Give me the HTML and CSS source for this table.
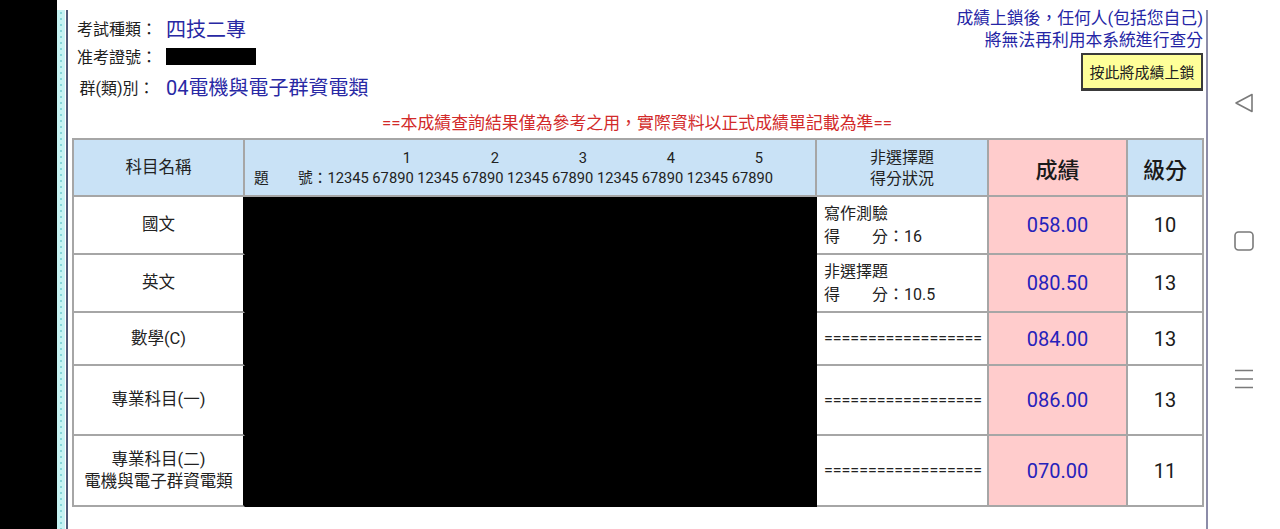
FILE: index.html
```html
<!DOCTYPE html>
<html lang="zh-Hant">
<head>
<meta charset="utf-8">
<title>成績查詢</title>
<link rel="stylesheet" href="styles.css">
</head>
<body>
<div class="screen">
  <div class="blackbar"></div>
  <div class="strip"></div>
  <div class="edge"></div>
  <main class="content">
    <div class="top">
      <div class="info">
        <div class="row r1"><span class="lbl">考試種類：</span><span class="val">四技二專</span></div>
        <div class="row r2"><span class="lbl">准考證號：</span><span class="redact"></span></div>
        <div class="row r3"><span class="lbl">群(類)別：</span><span class="val">04電機與電子群資電類</span></div>
      </div>
      <div class="lock">
        <p class="warn">成績上鎖後，任何人(包括您自己)<br>將無法再利用本系統進行查分</p>
        <button class="lockbtn" type="button">按此將成績上鎖</button>
      </div>
    </div>
    <p class="notice">==本成績查詢結果僅為參考之用，實際資料以正式成績單記載為準==</p>
    <table class="scores">
      <colgroup>
        <col class="c1"><col class="c2"><col class="c3"><col class="c4"><col class="c5">
      </colgroup>
      <thead>
        <tr class="hrow">
          <th class="subj">科目名稱</th>
          <th class="qhead">
            <div class="qnums"><span>1</span><span>2</span><span>3</span><span>4</span><span>5</span></div>
            <div class="qline"><span>題　　號：</span>12345 67890 12345 67890 12345 67890 12345 67890 12345 67890</div>
          </th>
          <th class="nhead">非選擇題<br>得分狀況</th>
          <th class="shead">成績</th>
          <th class="ghead">級分</th>
        </tr>
      </thead>
      <tbody>
        <tr class="d1">
          <td class="subj">國文</td>
          <td class="hidden" rowspan="5"></td>
          <td class="note">寫作測驗<br>得　　分：16</td>
          <td class="score">058.00</td>
          <td class="grade">10</td>
        </tr>
        <tr class="d2">
          <td class="subj">英文</td>
          <td class="note">非選擇題<br>得　　分：10.5</td>
          <td class="score">080.50</td>
          <td class="grade">13</td>
        </tr>
        <tr class="d3">
          <td class="subj">數學(C)</td>
          <td class="note">==================</td>
          <td class="score">084.00</td>
          <td class="grade">13</td>
        </tr>
        <tr class="d4">
          <td class="subj">專業科目(一)</td>
          <td class="note">==================</td>
          <td class="score">086.00</td>
          <td class="grade">13</td>
        </tr>
        <tr class="d5">
          <td class="subj">專業科目(二)<br>電機與電子群資電類</td>
          <td class="note">==================</td>
          <td class="score">070.00</td>
          <td class="grade">11</td>
        </tr>
      </tbody>
    </table>
  </main>
  <div class="edge right"></div>
  <nav class="navbar">
    <svg class="nav-icon" width="20" height="20" viewBox="0 0 20 20" aria-label="back"><path d="M2 10 L18 1.5 L18 18.5 Z" fill="none" stroke="#7a7a7a" stroke-width="1.6" stroke-linejoin="round"/></svg>
    <svg class="nav-icon" width="20" height="20" viewBox="0 0 20 20" aria-label="home"><rect x="1" y="1" width="18" height="18" rx="3.5" fill="none" stroke="#7a7a7a" stroke-width="1.6"/></svg>
    <svg class="nav-icon" width="20" height="20" viewBox="0 0 20 20" aria-label="recent"><path d="M1 1.5 H19 M1 10 H19 M1 18.5 H19" fill="none" stroke="#7a7a7a" stroke-width="1.6"/></svg>
  </nav>
</div>
</body>
</html>
```

FILE: styles.css
```css
* { box-sizing: border-box; }

html, body {
  margin: 0;
  padding: 0;
  background: #ffffff;
}

body {
  font-family: Roboto, "Noto Sans CJK TC", "Noto Sans", sans-serif;
  color: #222;
  width: 1280px;
  height: 529px;
  overflow: hidden;
}

.screen {
  display: flex;
  height: 529px;
}

.blackbar {
  width: 57px;
  flex: none;
  background: #000;
}

.strip {
  width: 8px;
  flex: none;
  margin-top: 10px;
  background-color: #c6f3f3;
  background-image: radial-gradient(circle, #86d6da 0.9px, transparent 1.4px);
  background-size: 8px 6px;
}

.edge {
  width: 2px;
  flex: none;
  margin: 10px 0 0 1px;
  background: #4f5a78;
}

.edge.right {
  margin: 10px 0 0 0;
  background: #8c8ca8;
}

.content {
  flex: 1;
  min-width: 0;
  display: flex;
  flex-direction: column;
}

.top {
  display: flex;
  justify-content: space-between;
  align-items: flex-start;
}

.info {
  padding: 14px 0 0 9px;
}

.row {
  display: flex;
  align-items: center;
  height: 28px;
}

.row.r3 {
  height: 33px;
}

.lbl {
  width: 80px;
  text-align: center;
  font-size: 16px;
  color: #1e1e1e;
}

.val {
  margin-left: 9px;
  font-size: 20px;
  color: #2828a4;
}

.redact {
  margin-left: 9px;
  width: 90px;
  height: 17px;
  background: #000;
}

.lock {
  display: flex;
  flex-direction: column;
  align-items: flex-end;
  padding: 7px 3px 0 0;
}

.warn {
  margin: 0;
  text-align: right;
  font-size: 16.8px;
  line-height: 22px;
  color: #2525a5;
}

.lockbtn {
  margin-top: 2px;
  width: 122px;
  height: 38px;
  padding: 0;
  background: #ffff99;
  border: 2px solid #3a3a3a;
  border-bottom-width: 3px;
  font-family: Roboto, "Noto Sans CJK TC", sans-serif;
  font-size: 15px;
  color: #222;
}

.notice {
  margin: 10px 0 0 0;
  text-align: center;
  font-size: 16.9px;
  line-height: 20px;
  color: #d22a2a;
}

.scores {
  margin: 5px 0 0 4px;
  width: 1132px;
  table-layout: fixed;
  border-collapse: separate;
  border-spacing: 0;
  border-top: 2px solid #a6a6a6;
  border-left: 2px solid #a6a6a6;
}

.c1 { width: 171px; }
.c2 { width: 572px; }
.c3 { width: 172px; }
.c4 { width: 139px; }
.c5 { width: 76px; }

.scores th,
.scores td {
  padding: 0;
  border-right: 2px solid #a6a6a6;
  border-bottom: 2px solid #a6a6a6;
  vertical-align: middle;
  font-weight: normal;
}

.scores th {
  background: #c9e2f6;
}

.hrow { height: 57px; }
.d1 { height: 58px; }
.d2 { height: 58px; }
.d3 { height: 53px; }
.d4 { height: 70px; }
.d5 { height: 71px; }

.subj {
  text-align: center;
  font-size: 16.5px;
  line-height: 22px;
  color: #222;
}

td.subj {
  border-right-color: #000;
}

.qhead {
  text-align: left;
  padding-left: 9px !important;
  font-size: 14.7px;
  line-height: 20px;
  color: #222;
}

.qnums {
  display: flex;
  padding-left: 109px;
}

.qnums span {
  width: 88px;
  text-align: center;
}

.qline {
  white-space: pre;
}

.nhead {
  text-align: center;
  font-size: 16px;
  line-height: 21px;
  color: #222;
}

.shead {
  background: #ffcccc !important;
  text-align: center;
  font-size: 22px;
  font-weight: 500 !important;
  color: #1a1a1a;
}

.ghead {
  text-align: center;
  font-size: 22px;
  font-weight: 500 !important;
  color: #1a1a1a;
}

.hidden {
  background: #000;
  border-right-color: #000 !important;
  border-bottom-color: #000 !important;
}

.note {
  padding-left: 7px !important;
  text-align: left;
  font-size: 16px;
  line-height: 23px;
  color: #222;
  white-space: nowrap;
  overflow: hidden;
}

.score {
  background: #ffcccc;
  text-align: center;
  font-size: 20px;
  color: #2622bb;
}

.grade {
  text-align: center;
  font-size: 20px;
  color: #1a1a1a;
}

.navbar {
  width: 72px;
  flex: none;
  display: flex;
  flex-direction: column;
  align-items: center;
  padding-top: 93px;
  gap: 118px;
  background: #ffffff;
}

.nav-icon {
  display: block;
}
```
